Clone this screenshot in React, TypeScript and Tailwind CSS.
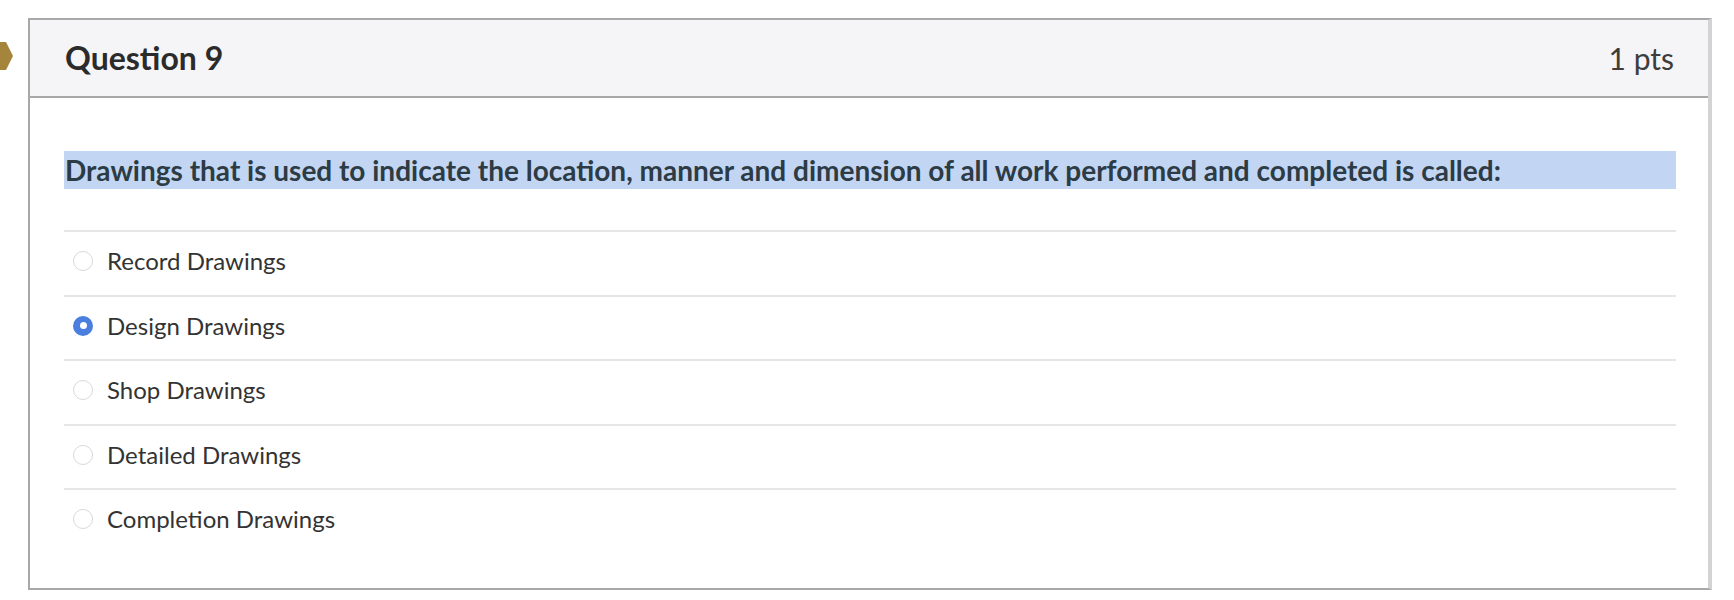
import React from "react";

const options = [
  { label: "Record Drawings", checked: false },
  { label: "Design Drawings", checked: true },
  { label: "Shop Drawings", checked: false },
  { label: "Detailed Drawings", checked: false },
  { label: "Completion Drawings", checked: false },
];

function Radio({ checked }: { checked: boolean }) {
  if (checked) {
    return (
      <span className="flex h-[20px] w-[20px] items-center justify-center rounded-full bg-[#4a7fe0]">
        <span className="h-[7px] w-[7px] rounded-full bg-white" />
      </span>
    );
  }
  return <span className="h-[20px] w-[20px] rounded-full border border-[#d9d9d9] bg-white" />;
}

export default function App() {
  return (
    <div
      className="relative h-[600px] w-[1734px] bg-white pl-[28px] pt-[18px]"
      style={{ fontFamily: "Lato, 'Open Sans', sans-serif" }}
    >
      <svg className="absolute left-0 top-[42px]" width="14" height="28" viewBox="0 0 14 28">
        <polygon points="-8,0 6,0 13,14 6,28 -8,28" fill="#a5853b" />
      </svg>
      <div className="flex h-[572px] w-[1684px] flex-col border-2 border-[#a8a8a8] border-r-[4px] border-r-[#d3d3d3]">
        <div className="flex h-[78px] items-center justify-between border-b-2 border-[#a8a8a8] bg-[#f5f4f7] pl-[35px] pr-[34px]">
          <span className="text-[32px] font-bold text-[#2b2b2b]">Question 9</span>
          <span className="text-[30px] text-[#3d3d3d]">1 pts</span>
        </div>
        <div className="flex flex-col pl-[34px] pr-[32px] pt-[53px]">
          <div className="flex h-[38px] items-center bg-[#c2d6f4] pl-[1px] text-[28px] font-bold text-[#2d3b45]">
            Drawings that is used to indicate the location, manner and dimension of all work performed and completed is called:
          </div>
          <div className="mt-[41px] flex flex-col">
            {options.map((o) => (
              <div
                key={o.label}
                className="flex h-[64.5px] items-center border-t-2 border-[#e4e6e8] pb-[4px] pl-[9px]"
              >
                <Radio checked={o.checked} />
                <span className="ml-[14px] text-[24px] text-[#333333]">{o.label}</span>
              </div>
            ))}
          </div>
        </div>
      </div>
    </div>
  );
}
